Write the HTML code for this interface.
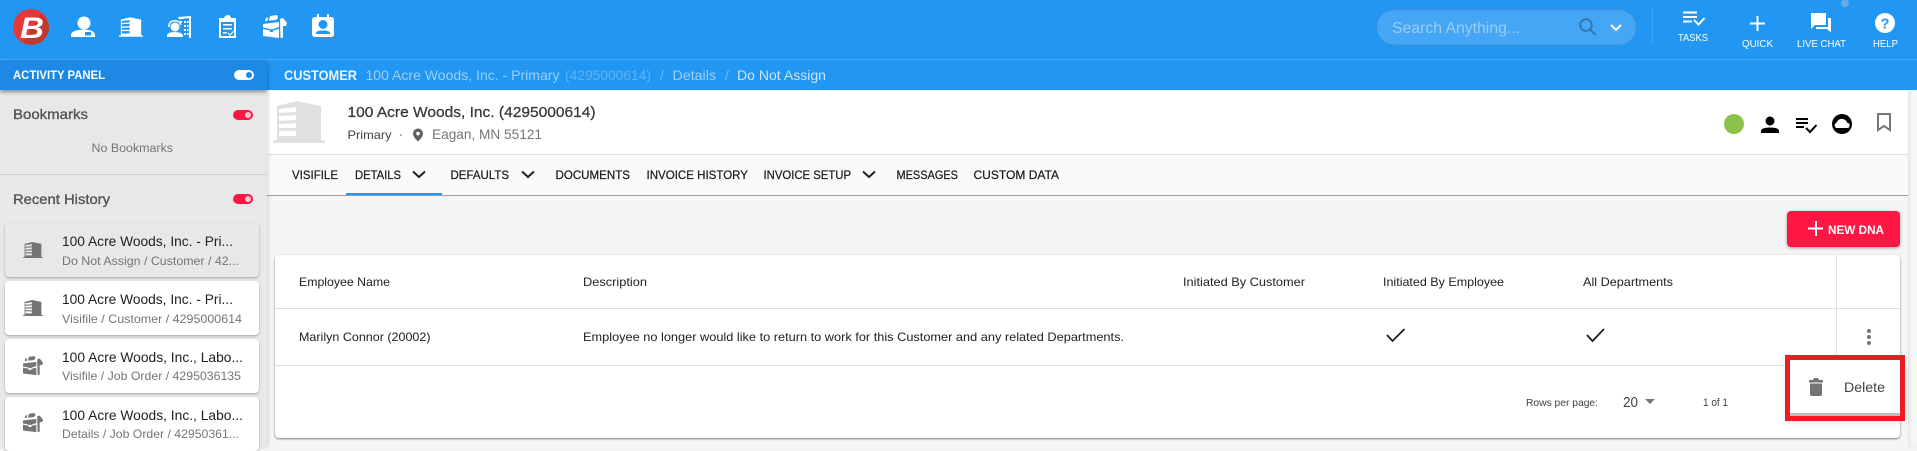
<!DOCTYPE html>
<html><head><meta charset="utf-8"><title>Customer DNA</title>
<style>
html,body{margin:0;padding:0;width:1917px;height:447px;overflow:hidden;background:#f5f5f5}
div{position:absolute;box-sizing:border-box}
svg{position:absolute;left:0;top:0}
text{font-family:"Liberation Sans",sans-serif;white-space:pre}
.card{left:5px;width:254px;height:54px;background:#fff;border-radius:4px;box-shadow:0 1px 2px rgba(0,0,0,.3)}
.m{stroke:currentColor;stroke-width:.2}
</style></head><body>
<div style="left:0;top:0;width:1917px;height:90px;background:#2196f3"></div>
<div style="left:0;top:59px;width:1917px;height:1px;background:rgba(255,255,255,.2)"></div>
<div style="left:1908px;top:90px;width:9px;height:357px;background:#f7f7f7;box-shadow:inset 2px 0 3px rgba(0,0,0,.08)"></div>
<div style="left:267px;top:90px;width:1641px;height:64px;background:#fff"></div>
<div style="left:267px;top:154px;width:1641px;height:42px;background:#fafafa;border-top:1px solid #e0e0e0;border-bottom:1px solid #9e9e9e"></div>
<div style="left:346px;top:193px;width:96px;height:2px;background:#2196f3"></div>
<div style="left:0;top:90px;width:267px;height:357px;background:#e8e8e8;box-shadow:1px 0 4px rgba(0,0,0,.15)"></div>
<div style="left:0;top:60px;width:267px;height:30px;background:#1e88e5;box-shadow:0 2px 4px rgba(0,0,0,.4)"></div>
<div style="left:0;top:174px;width:267px;height:1px;background:#d0d0d0"></div>
<div class="card" style="top:223px;background:#e8e8e8"></div>
<div class="card" style="top:281px"></div>
<div class="card" style="top:339px"></div>
<div class="card" style="top:397px"></div>
<div style="left:1787px;top:211px;width:113px;height:36px;background:#ff1744;border-radius:4px;box-shadow:0 1px 3px rgba(0,0,0,.35)"></div>
<div style="left:275px;top:255px;width:1625px;height:183px;background:#fff;border-radius:4px;box-shadow:0 1px 2px rgba(0,0,0,.5)"></div>
<div style="left:275px;top:308px;width:1625px;height:1px;background:#e0e0e0"></div>
<div style="left:275px;top:365px;width:1625px;height:1px;background:#e0e0e0"></div>
<div style="left:1836px;top:255px;width:1px;height:105px;background:#e0e0e0"></div>
<div style="left:1790px;top:360px;width:110px;height:56px;background:#fff;border-bottom:3px solid #bdbdbd;box-shadow:0 3px 10px rgba(0,0,0,.25)"></div>
<div style="left:1785px;top:355px;width:120px;height:66px;border:5px solid #ed1c24"></div>

<svg width="1917" height="447" viewBox="0 0 1917 447" xmlns="http://www.w3.org/2000/svg">
<defs>
<symbol id="bld" viewBox="0 0 52 42"><path fill-rule="evenodd" d="M0 42V40Q0 39 4 39V5L24 0L48 5V39Q52 39 52 42ZM6 8L23 6V11L6 12ZM6 15L23 14V19L6 20ZM6 23L23 22V27L6 27ZM6 30L23 30V35L6 35Z"/></symbol>
<symbol id="job" viewBox="0 0 24 24"><path d="M0 9L16 7V12L9 14.500L0 12.500ZM0 14L7 15.500V17L10 17V15.500L16 14V23L0 21ZM17 4L17.500 23L20 22.500V11L23 11L24 8L20 3ZM2 6L3 3L5 2.500L4.500 6ZM6 5.500L7 1L14 0L15 3L13 5Z"/></symbol>
</defs>

<!-- logo -->
<circle cx="31" cy="27" r="18" fill="#e53935"/>
<path d="M23 43L41 14Q49 22 49 28A18 18 0 0 1 34 44.700Z" fill="#c0392b"/>
<text x="20" y="38" font-size="30" font-weight="bold" font-style="italic" fill="#fff" textLength="24" lengthAdjust="spacingAndGlyphs">B</text>

<!-- nav icons -->
<g fill="#fff">
<circle cx="84" cy="23" r="6.500"/>
<path d="M71 37V35Q71 30 84 29.500Q95 30 95 35V37Z"/>
<rect x="85" y="32" width="6" height="3.500" fill="#2196f3"/>
<use href="#bld" x="119" y="17" width="24" height="20"/>
<circle cx="175" cy="27" r="4.500"/>
<path d="M167 37V35Q168 32 175 32Q181 32 183 35V37Z"/>
<path d="M168 27Q168 20 175 20Q180 20 181.500 25L180 25Q179 21.500 175 21.500Q169.500 21.500 169.500 27Z"/>
<path fill-rule="evenodd" d="M178 17L191 16V38H189V18L179 19.500Z"/>
<g><rect x="180" y="21" width="2" height="2"/><rect x="184" y="21" width="2" height="2"/><rect x="187" y="21" width="1.500" height="2"/><rect x="184" y="25" width="2" height="2"/><rect x="187" y="25" width="1.500" height="2"/><rect x="184" y="29" width="2" height="2"/><rect x="187" y="29" width="1.500" height="2"/><rect x="184" y="33" width="2" height="2"/><rect x="187" y="33" width="1.500" height="2"/></g>
<path fill-rule="evenodd" d="M219 18H224Q225 15 228 15Q230.500 15 231 18H236V38H219ZM221 22V36H234V22ZM223 24H232V25.500H223ZM223 28H232V29.500H223ZM223 32H227V33.500H223Z"/>
<path d="M228 33L230 35L234 31" fill="none" stroke="#fff" stroke-width="1.200"/>
<use href="#job" x="263" y="15" width="24" height="24"/>
<path fill-rule="evenodd" d="M315 17H317V14H319V17H327V14H329V17H331Q334 17 334 20V34Q334 37 331 37H315Q312 37 312 34V20Q312 17 315 17ZM323 20A4.500 4.500 0 1 0 323 29A4.500 4.500 0 1 0 323 20ZM316 34H330V32.500Q329 30.500 323 30.500Q317 30.500 316 32.500Z"/>
</g>

<!-- search -->
<rect x="1376.500" y="9.500" width="260" height="35.500" rx="17.700" fill="#45a6f5" stroke="#3a8fd6" stroke-width="1"/>
<text x="1392" y="33" font-size="16" fill="#fff" fill-opacity=".45" textLength="128" lengthAdjust="spacingAndGlyphs">Search Anything...</text>
<g fill="none" stroke="#2f74ad" stroke-width="1.800"><circle cx="1586" cy="25" r="5.800"/><path d="M1590 29.500L1596 35"/></g>
<path d="M1611 25L1616 30L1621 25" fill="none" stroke="#fff" stroke-width="2"/>
<rect x="1652" y="9" width="1" height="36" fill="#fff" fill-opacity=".15"/>
<circle cx="1845" cy="3" r="4" fill="#64a9ea"/>

<!-- right top icons -->
<g fill="#fff">
<rect x="1683" y="11.500" width="14" height="2"/><rect x="1683" y="16" width="14" height="2"/><rect x="1683" y="20.500" width="9" height="2"/>
<path d="M1694 20L1698.500 24.500L1704.500 18" fill="none" stroke="#fff" stroke-width="2"/>
<rect x="1756.500" y="16" width="2" height="15"/><rect x="1750" y="22.500" width="15" height="2"/>
<path d="M1811 13H1826V25H1815L1811 29ZM1828 18H1831V32.500L1827 29H1816V27H1828Z"/>
<circle cx="1885" cy="23" r="10"/>
</g>
<text x="1885" y="28.500" font-size="15" font-weight="bold" fill="#2196f3" text-anchor="middle">?</text>
<g fill="#fff" font-size="10">
<text x="1678" y="41" textLength="30" lengthAdjust="spacingAndGlyphs">TASKS</text>
<text x="1742" y="47" textLength="31" lengthAdjust="spacingAndGlyphs">QUICK</text>
<text x="1797" y="47" textLength="49" lengthAdjust="spacingAndGlyphs">LIVE CHAT</text>
<text x="1873" y="47" textLength="25" lengthAdjust="spacingAndGlyphs">HELP</text>
</g>

<!-- activity bar -->
<text x="13" y="79" font-size="12" font-weight="bold" fill="#fff" textLength="92" lengthAdjust="spacingAndGlyphs">ACTIVITY PANEL</text>
<rect x="234" y="70" width="20" height="10" rx="5" fill="#fff"/><circle cx="249" cy="75" r="3" fill="#1e88e5"/>
<text x="284" y="80" font-size="14" font-weight="bold" fill="#fff" fill-opacity=".9" textLength="73" lengthAdjust="spacingAndGlyphs">CUSTOMER</text>
<text x="365.500" y="80" font-size="14" fill="#fff" fill-opacity=".55" textLength="194" lengthAdjust="spacingAndGlyphs">100 Acre Woods, Inc. - Primary</text>
<text x="565" y="80" font-size="14" fill="#fff" fill-opacity=".28" textLength="86" lengthAdjust="spacingAndGlyphs">(4295000614)</text>
<text x="660" y="80" font-size="14" fill="#fff" fill-opacity=".35">/</text>
<text x="672.500" y="80" font-size="14" fill="#fff" fill-opacity=".55" textLength="43.500" lengthAdjust="spacingAndGlyphs">Details</text>
<text x="725" y="80" font-size="14" fill="#fff" fill-opacity=".35">/</text>
<text x="737" y="80" font-size="14" fill="#fff" fill-opacity=".75" textLength="89" lengthAdjust="spacingAndGlyphs">Do Not Assign</text>

<!-- sidebar -->
<text x="13" y="119" font-size="14" fill="#616161" class="m" textLength="75" lengthAdjust="spacingAndGlyphs">Bookmarks</text>
<rect x="233" y="110" width="20" height="10" rx="5" fill="#ff1744"/><circle cx="248" cy="115" r="3" fill="#f5c6cf"/>
<text x="91.500" y="152" font-size="11.500" fill="#757575" textLength="81.500" lengthAdjust="spacingAndGlyphs">No Bookmarks</text>
<text x="13" y="204" font-size="14" fill="#616161" class="m" textLength="97" lengthAdjust="spacingAndGlyphs">Recent History</text>
<rect x="233" y="194" width="20" height="10" rx="5" fill="#ff1744"/><circle cx="248" cy="199" r="3" fill="#f5c6cf"/>

<g fill="#757575">
<use href="#bld" x="23" y="242" width="20" height="16"/>
<use href="#bld" x="23" y="300" width="20" height="16"/>
<use href="#job" x="23" y="356" width="20" height="20"/>
<use href="#job" x="23" y="413" width="20" height="20"/>
</g>
<g font-size="14" fill="#212121">
<text x="62" y="246" textLength="171" lengthAdjust="spacingAndGlyphs">100 Acre Woods, Inc. - Pri...</text>
<text x="62" y="304" textLength="171" lengthAdjust="spacingAndGlyphs">100 Acre Woods, Inc. - Pri...</text>
<text x="62" y="362" textLength="181" lengthAdjust="spacingAndGlyphs">100 Acre Woods, Inc., Labo...</text>
<text x="62" y="420" textLength="181" lengthAdjust="spacingAndGlyphs">100 Acre Woods, Inc., Labo...</text>
</g>
<g font-size="12" fill="#757575">
<text x="62" y="265" textLength="177" lengthAdjust="spacingAndGlyphs">Do Not Assign / Customer / 42...</text>
<text x="62" y="323" textLength="180" lengthAdjust="spacingAndGlyphs">Visifile / Customer / 4295000614</text>
<text x="62" y="380" textLength="179" lengthAdjust="spacingAndGlyphs">Visifile / Job Order / 4295036135</text>
<text x="62" y="438" textLength="177" lengthAdjust="spacingAndGlyphs">Details / Job Order / 42950361...</text>
</g>

<!-- customer header -->
<use href="#bld" x="273" y="101" width="52" height="42" fill="#e0e0e0"/>
<text x="347.500" y="117" font-size="14.500" fill="#424242" class="m" textLength="248" lengthAdjust="spacingAndGlyphs">100 Acre Woods, Inc. (4295000614)</text>
<text x="347.500" y="139" font-size="12" fill="#424242" textLength="44" lengthAdjust="spacingAndGlyphs">Primary</text>
<circle cx="401" cy="135" r="1" fill="#9e9e9e"/>
<path fill-rule="evenodd" d="M418 128.500A5 5 0 0 1 423 133.500Q423 137 418 141.500Q413 137 413 133.500A5 5 0 0 1 418 128.500ZM418 131.800A1.800 1.800 0 1 0 418 135.400A1.800 1.800 0 1 0 418 131.800Z" fill="#616161"/>
<text x="432" y="139" font-size="13.500" fill="#757575" textLength="110" lengthAdjust="spacingAndGlyphs">Eagan, MN 55121</text>

<circle cx="1734" cy="124" r="10" fill="#8bc34a"/>
<circle cx="1770" cy="121" r="4.500"/>
<path d="M1761 133V130.500Q1762 127.500 1770 127.500Q1778 127.500 1779 130.500V133Z"/>
<rect x="1796" y="118" width="12" height="2"/><rect x="1796" y="122" width="12" height="2"/><rect x="1796" y="126" width="8" height="2"/>
<path d="M1806 128L1810 132L1816.500 125" fill="none" stroke="#000" stroke-width="2"/>
<circle cx="1842" cy="124" r="10"/>
<path d="M1836 128Q1833 125 1836.500 122.500Q1839 118 1843 119Q1846.500 120 1847 122.500Q1851 123.500 1849 127.500Q1848.500 128 1847 128Z" fill="#fff"/>
<path d="M1878 114H1890V130L1884 126L1878 130Z" fill="none" stroke="#757575" stroke-width="2"/>

<!-- tabs -->
<g font-size="12" fill="#212121" class="m">
<text x="292" y="179" textLength="46" lengthAdjust="spacingAndGlyphs">VISIFILE</text>
<text x="355" y="179" textLength="46" lengthAdjust="spacingAndGlyphs">DETAILS</text>
<text x="450.500" y="179" textLength="58.500" lengthAdjust="spacingAndGlyphs">DEFAULTS</text>
<text x="555.500" y="179" textLength="74.500" lengthAdjust="spacingAndGlyphs">DOCUMENTS</text>
<text x="646.500" y="179" textLength="101.500" lengthAdjust="spacingAndGlyphs">INVOICE HISTORY</text>
<text x="763.500" y="179" textLength="87.500" lengthAdjust="spacingAndGlyphs">INVOICE SETUP</text>
<text x="896.500" y="179" textLength="61.500" lengthAdjust="spacingAndGlyphs">MESSAGES</text>
<text x="973.500" y="179" textLength="85.500" lengthAdjust="spacingAndGlyphs">CUSTOM DATA</text>
</g>
<g fill="none" stroke="#212121" stroke-width="2">
<path d="M413 171.500L419 177L425 171.500"/>
<path d="M522 171.500L528 177L534 171.500"/>
<path d="M863 171.500L869 177L875 171.500"/>
</g>

<!-- new dna -->
<rect x="1815" y="221" width="2" height="15" fill="#fff"/><rect x="1808" y="227.500" width="15" height="2" fill="#fff"/>
<text x="1828" y="234" font-size="12" font-weight="bold" fill="#fff" textLength="56" lengthAdjust="spacingAndGlyphs">NEW DNA</text>

<!-- table -->
<g font-size="12" fill="#212121">
<text x="299" y="286" textLength="91" lengthAdjust="spacingAndGlyphs">Employee Name</text>
<text x="583" y="286" textLength="64" lengthAdjust="spacingAndGlyphs">Description</text>
<text x="1183" y="286" textLength="122" lengthAdjust="spacingAndGlyphs">Initiated By Customer</text>
<text x="1383" y="286" textLength="121" lengthAdjust="spacingAndGlyphs">Initiated By Employee</text>
<text x="1583" y="286" textLength="90" lengthAdjust="spacingAndGlyphs">All Departments</text>
<text x="299" y="341" textLength="131.500" lengthAdjust="spacingAndGlyphs">Marilyn Connor (20002)</text>
<text x="583" y="341" textLength="541" lengthAdjust="spacingAndGlyphs">Employee no longer would like to return to work for this Customer and any related Departments.</text>
</g>
<g fill="none" stroke="#212121" stroke-width="1.800">
<path d="M1387 335L1392.500 341L1404.500 329"/>
<path d="M1587 335L1592.500 341L1604 329"/>
</g>
<g fill="#757575"><circle cx="1869" cy="331" r="2"/><circle cx="1869" cy="337" r="2"/><circle cx="1869" cy="343" r="2"/></g>
<text x="1526" y="406" font-size="10.500" fill="#424242" textLength="72" lengthAdjust="spacingAndGlyphs">Rows per page:</text>
<text x="1623" y="407" font-size="14.500" fill="#424242" textLength="15" lengthAdjust="spacingAndGlyphs">20</text>
<path d="M1645 399H1655L1650 404Z" fill="#757575"/>
<text x="1703" y="406" font-size="11" fill="#424242" textLength="25" lengthAdjust="spacingAndGlyphs">1 of 1</text>

<!-- popup -->
<path d="M1809 380H1813L1814 378H1818L1819 380H1823V382.500H1809ZM1810 383.500H1822V394Q1822 396 1820 396H1812Q1810 396 1810 394Z" fill="#757575"/>
<text x="1844" y="392" font-size="14" fill="#424242" textLength="41" lengthAdjust="spacingAndGlyphs">Delete</text>
</svg>
</body></html>
